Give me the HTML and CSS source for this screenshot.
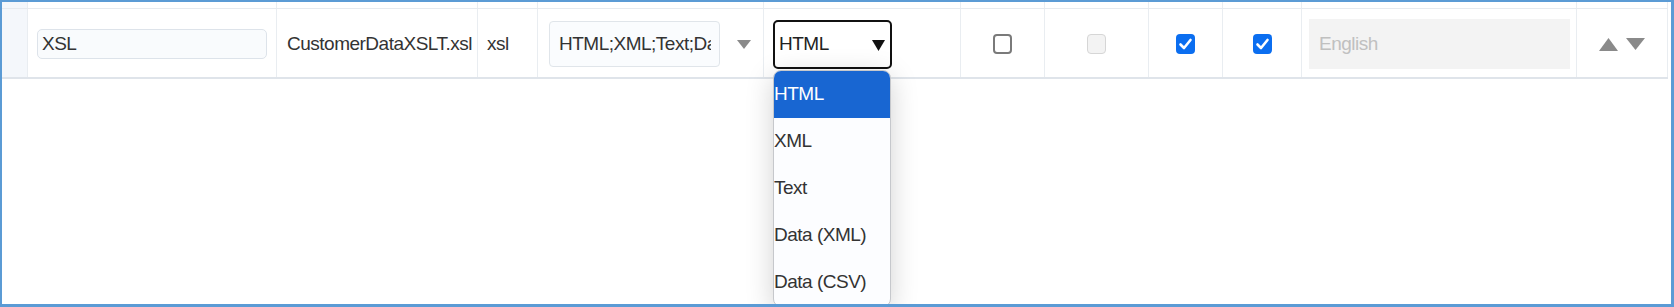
FILE: index.html
```html
<!DOCTYPE html>
<html lang="en">
<head>
<meta charset="utf-8">
<title>Format row</title>
<link rel="stylesheet" href="styles.css">
</head>
<body>
<div class="frame">
  <div class="table">
    <div class="row prev">
      <div class="cell first"></div><div class="cell"></div><div class="cell"></div><div class="cell"></div>
      <div class="cell"></div><div class="cell"></div><div class="cell"></div><div class="cell"></div>
      <div class="cell"></div><div class="cell"></div><div class="cell"></div><div class="cell"></div>
    </div>
    <div class="row main">
      <div class="cell first"></div>
      <div class="cell pad9"><div class="text-input">XSL</div></div>
      <div class="cell pad10"><span class="label">CustomerDataXSLT.xsl</span></div>
      <div class="cell pad9"><span class="label">xsl</span></div>
      <div class="cell multi">
        <div class="text-input tall"><span class="clip">HTML;XML;Text;Data (XML);Data (CSV)</span></div>
        <svg class="caret" width="14" height="9" viewBox="0 0 14 9"><polygon points="0,0 14,0 7,9" fill="#8a8a8a"/></svg>
      </div>
      <div class="cell pad9">
        <div class="select-wrap">
          <div class="select">
            <span>HTML</span>
            <svg class="sel-arrow" width="13" height="11" viewBox="0 0 13 11"><polygon points="0,0 13,0 6.5,11" fill="#111"/></svg>
          </div>
          <ul class="menu">
            <li class="active">HTML</li>
            <li>XML</li>
            <li>Text</li>
            <li>Data (XML)</li>
            <li>Data (CSV)</li>
          </ul>
        </div>
      </div>
      <div class="cell center"><span class="cb"></span></div>
      <div class="cell center"><span class="cb disabled"></span></div>
      <div class="cell center"><span class="cb checked"><svg width="19" height="20" viewBox="0 0 19 20"><path d="M4.5 10.5 L8 14 L14.5 6" fill="none" stroke="#fff" stroke-width="2.6" stroke-linecap="round" stroke-linejoin="round"/></svg></span></div>
      <div class="cell center"><span class="cb checked"><svg width="19" height="20" viewBox="0 0 19 20"><path d="M4.5 10.5 L8 14 L14.5 6" fill="none" stroke="#fff" stroke-width="2.6" stroke-linecap="round" stroke-linejoin="round"/></svg></span></div>
      <div class="cell pad7"><div class="disabled-input">English</div></div>
      <div class="cell center arrows">
        <svg width="19" height="13" viewBox="0 0 19 13"><polygon points="9.5,0 19,13 0,13" fill="#8a8a8a"/></svg>
        <svg width="19" height="12" viewBox="0 0 19 12"><polygon points="0,0 19,0 9.5,12" fill="#8a8a8a"/></svg>
      </div>
    </div>
  </div>
</div>
</body>
</html>
```
FILE: styles.css
```css
html, body {
  margin: 0;
  padding: 0;
  background: #ffffff;
}

body {
  font-family: "Liberation Sans", Arial, sans-serif;
  font-size: 19px;
  letter-spacing: -0.5px;
  color: #333333;
}

.frame {
  box-sizing: border-box;
  width: 1674px;
  height: 307px;
  border-style: solid;
  border-color: #5b9bd5;
  border-width: 2px 3px 3px 2px;
  background: #ffffff;
  overflow: hidden;
}

.table {
  width: 1666px;
}

.row {
  display: grid;
  grid-template-columns: 26px 249px 201px 60px 226px 197px 84px 104px 74px 79px 275px 91px;
}

.row.prev {
  height: 6px;
  border-bottom: 1px solid #e6eaef;
}

.row.main {
  height: 68px;
  border-bottom: 2px solid #dfe4ea;
}

.cell {
  box-sizing: border-box;
  border-right: 1px solid #e9edf1;
  display: flex;
  align-items: center;
  min-width: 0;
}

.row.main .cell {
  padding-top: 2px;
}

.cell.first {
  background: #f4f7fb;
}

.row.main .pad9 {
  padding-left: 9px;
  padding-right: 9px;
}

.row.main .pad10 {
  padding-left: 10px;
  padding-right: 10px;
}

.row.main .pad7 {
  padding-left: 7px;
  padding-right: 6px;
}

.center {
  justify-content: center;
}

.label {
  white-space: nowrap;
}

.text-input {
  box-sizing: border-box;
  width: 100%;
  height: 30px;
  border: 1px solid #dde3ea;
  border-radius: 5px;
  background: #f9fbfd;
  padding: 0 4px;
  display: flex;
  align-items: center;
  overflow: hidden;
  white-space: nowrap;
}

.row.main .multi {
  padding-left: 11px;
  padding-right: 0;
}

.text-input.tall {
  flex: 0 0 171px;
  width: 171px;
  height: 46px;
  padding: 0 8px 0 9px;
  background: #fafcfe;
  border-color: #e0e5ea;
  border-radius: 4px;
}

.clip {
  overflow: hidden;
  display: block;
  width: 100%;
}

.caret {
  margin-left: 17px;
  flex: none;
}

.select-wrap {
  position: relative;
  width: 119px;
}

.select {
  box-sizing: border-box;
  height: 49px;
  border: 2px solid #111111;
  border-radius: 5px;
  background: #ffffff;
  padding: 0 5px 0 4px;
  display: flex;
  align-items: center;
  justify-content: space-between;
  color: #222222;
}

.sel-arrow {
  margin-top: 2px;
}

.menu {
  position: absolute;
  left: 0;
  top: 50px;
  box-sizing: border-box;
  width: 118px;
  margin: 0;
  padding: 0;
  list-style: none;
  background: #fcfdff;
  border: 1px solid #c6c8cc;
  border-radius: 8px;
  box-shadow: 0 6px 28px rgba(0, 0, 0, 0.18);
  overflow: hidden;
  z-index: 5;
}

.menu li {
  height: 47px;
  display: flex;
  align-items: center;
  padding-left: 0;
  color: #333333;
}

.menu li.active {
  background: #1866d2;
  color: #ffffff;
}

.cb {
  box-sizing: border-box;
  width: 19px;
  height: 20px;
  border: 2px solid #7a7a7a;
  border-radius: 4px;
  background: #ffffff;
  display: block;
}

.cb.disabled {
  border: 1.5px solid #d6d6d6;
  background: #f3f3f3;
}

.cb.checked {
  border: none;
  background: #0b6ef0;
}

.cb svg {
  display: block;
}

.disabled-input {
  box-sizing: border-box;
  width: 100%;
  height: 50px;
  background: #f3f3f3;
  color: #c0c0c0;
  padding: 0 10px;
  display: flex;
  align-items: center;
}

.arrows {
  gap: 8px;
}

.arrows svg {
  display: block;
}
```
